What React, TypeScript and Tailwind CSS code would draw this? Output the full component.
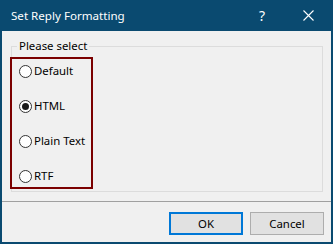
import React, { useState } from 'react';

const options = ['Default', 'HTML', 'Plain Text', 'RTF'];

function Radio({ checked }: { checked: boolean }) {
  return (
    <span className="w-[13px] h-[13px] rounded-full border border-[#333333] bg-white flex items-center justify-center shrink-0">
      {checked && <span className="w-[7px] h-[7px] rounded-full bg-[#1a1a1a]" />}
    </span>
  );
}

export default function App() {
  const [selected, setSelected] = useState('HTML');

  return (
    <div className="w-[333px] h-[244px] bg-[#0a4a70] flex flex-col px-[2px] pb-[2px] font-['Noto_Sans','Liberation_Sans',sans-serif] text-[11.4px] text-black overflow-hidden">
      {/* Title bar */}
      <div className="h-[31px] flex items-center shrink-0">
        <span className="pl-[9px] text-white text-[11.6px] flex-1">Set Reply Formatting</span>
        <div className="w-[46px] h-full flex items-center justify-center text-white text-[14px]">?</div>
        <div className="w-[46px] h-full flex items-center justify-center">
          <svg width="11" height="11" viewBox="0 0 11 11">
            <path d="M0.5 0.5 L10.5 10.5 M10.5 0.5 L0.5 10.5" stroke="white" strokeWidth="1.1" />
          </svg>
        </div>
      </div>

      {/* Body */}
      <div className="flex-1 bg-[#f0f0f0] flex flex-col">
        <fieldset className="mt-[7px] ml-[9px] mr-[8px] border border-[#dcdcdc] pb-[2px]">
          <legend className="ml-[5px] px-[2px] leading-[16px]">Please select</legend>
          <div className="mt-[3px] -ml-[2px] w-[83px] h-[132px] border-2 border-[#7b0000] flex flex-col gap-[19px] pt-[4px] pl-[7px]">
            {options.map(o => (
              <label
                key={o}
                onClick={() => setSelected(o)}
                className="h-[16px] flex items-center gap-[2px] cursor-default"
              >
                <Radio checked={selected === o} />
                <span>{o}</span>
              </label>
            ))}
          </div>
        </fieldset>

        <div className="mt-[9px] border-t border-[#a0a0a0] flex-1 flex justify-end gap-[7px] pt-[10px] pr-[7px]">
          <button className="w-[74px] h-[23px] border-2 border-[#0078d7] bg-[#e1e1e1]">OK</button>
          <button className="w-[74px] h-[23px] border border-[#adadad] bg-[#e1e1e1]">Cancel</button>
        </div>
      </div>
    </div>
  );
}
